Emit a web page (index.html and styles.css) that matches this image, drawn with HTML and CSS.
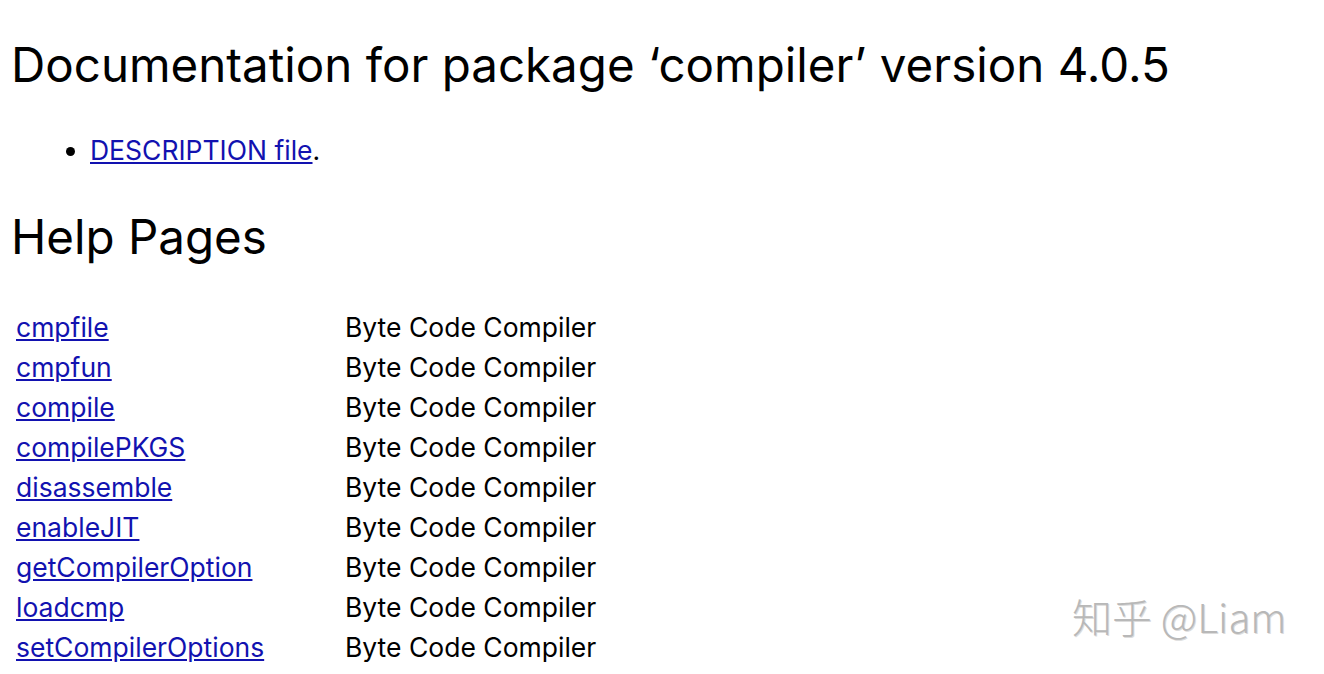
FILE: index.html
```html
<!DOCTYPE html>
<html>
<head>
<meta charset="utf-8">
<link rel="stylesheet" href="styles.css">
</head>
<body>
<h1 class="title">Documentation for package ‘compiler’ version 4.0.5</h1>
<ul class="files">
<li><a href="#">DESCRIPTION file</a>.</li>
</ul>
<h2 class="section">Help Pages</h2>
<table class="pages">
<tr><td class="name"><a href="#">cmpfile</a></td><td class="desc">Byte Code Compiler</td></tr>
<tr><td class="name"><a href="#">cmpfun</a></td><td class="desc">Byte Code Compiler</td></tr>
<tr><td class="name"><a href="#">compile</a></td><td class="desc">Byte Code Compiler</td></tr>
<tr><td class="name"><a href="#">compilePKGS</a></td><td class="desc">Byte Code Compiler</td></tr>
<tr><td class="name"><a href="#">disassemble</a></td><td class="desc">Byte Code Compiler</td></tr>
<tr><td class="name"><a href="#">enableJIT</a></td><td class="desc">Byte Code Compiler</td></tr>
<tr><td class="name"><a href="#">getCompilerOption</a></td><td class="desc">Byte Code Compiler</td></tr>
<tr><td class="name"><a href="#">loadcmp</a></td><td class="desc">Byte Code Compiler</td></tr>
<tr><td class="name"><a href="#">setCompilerOptions</a></td><td class="desc">Byte Code Compiler</td></tr>
</table>
<div class="watermark">知乎 @Liam</div>
</body>
</html>
```
FILE: styles.css
```css
html, body {
  margin: 0;
  padding: 0;
  background: #fff;
}
body {
  padding: 0 11px;
  font-family: Inter, "Noto Sans", sans-serif;
  color: #000;
  font-size: 26.5px;
}
.title {
  font-weight: 400;
  font-size: 47.5px;
  margin: 0;
  padding-top: 37px;
  line-height: 56px;
}
.files {
  margin: 37px 0 0 0;
  padding-left: 79px;
  line-height: 40px;
}
a {
  color: #1212b0;
  text-decoration: underline;
}
.section {
  font-weight: 400;
  font-size: 47.5px;
  line-height: 56px;
  margin: 39px 0 0 0;
}
.pages {
  margin-top: 42px;
  border-collapse: separate;
  border-spacing: 5px 0;
  line-height: 40px;
}
.pages td {
  padding: 0;
}
.name {
  width: 324px;
}
.watermark {
  position: absolute;
  left: 1072px;
  top: 587px;
  font-family: "Noto Sans CJK SC", "Noto Sans", sans-serif;
  font-size: 40px;
  font-weight: 300;
  color: #b8b8b8;
  text-shadow: 1px 1px 0 #dcdcdc;
}
```
